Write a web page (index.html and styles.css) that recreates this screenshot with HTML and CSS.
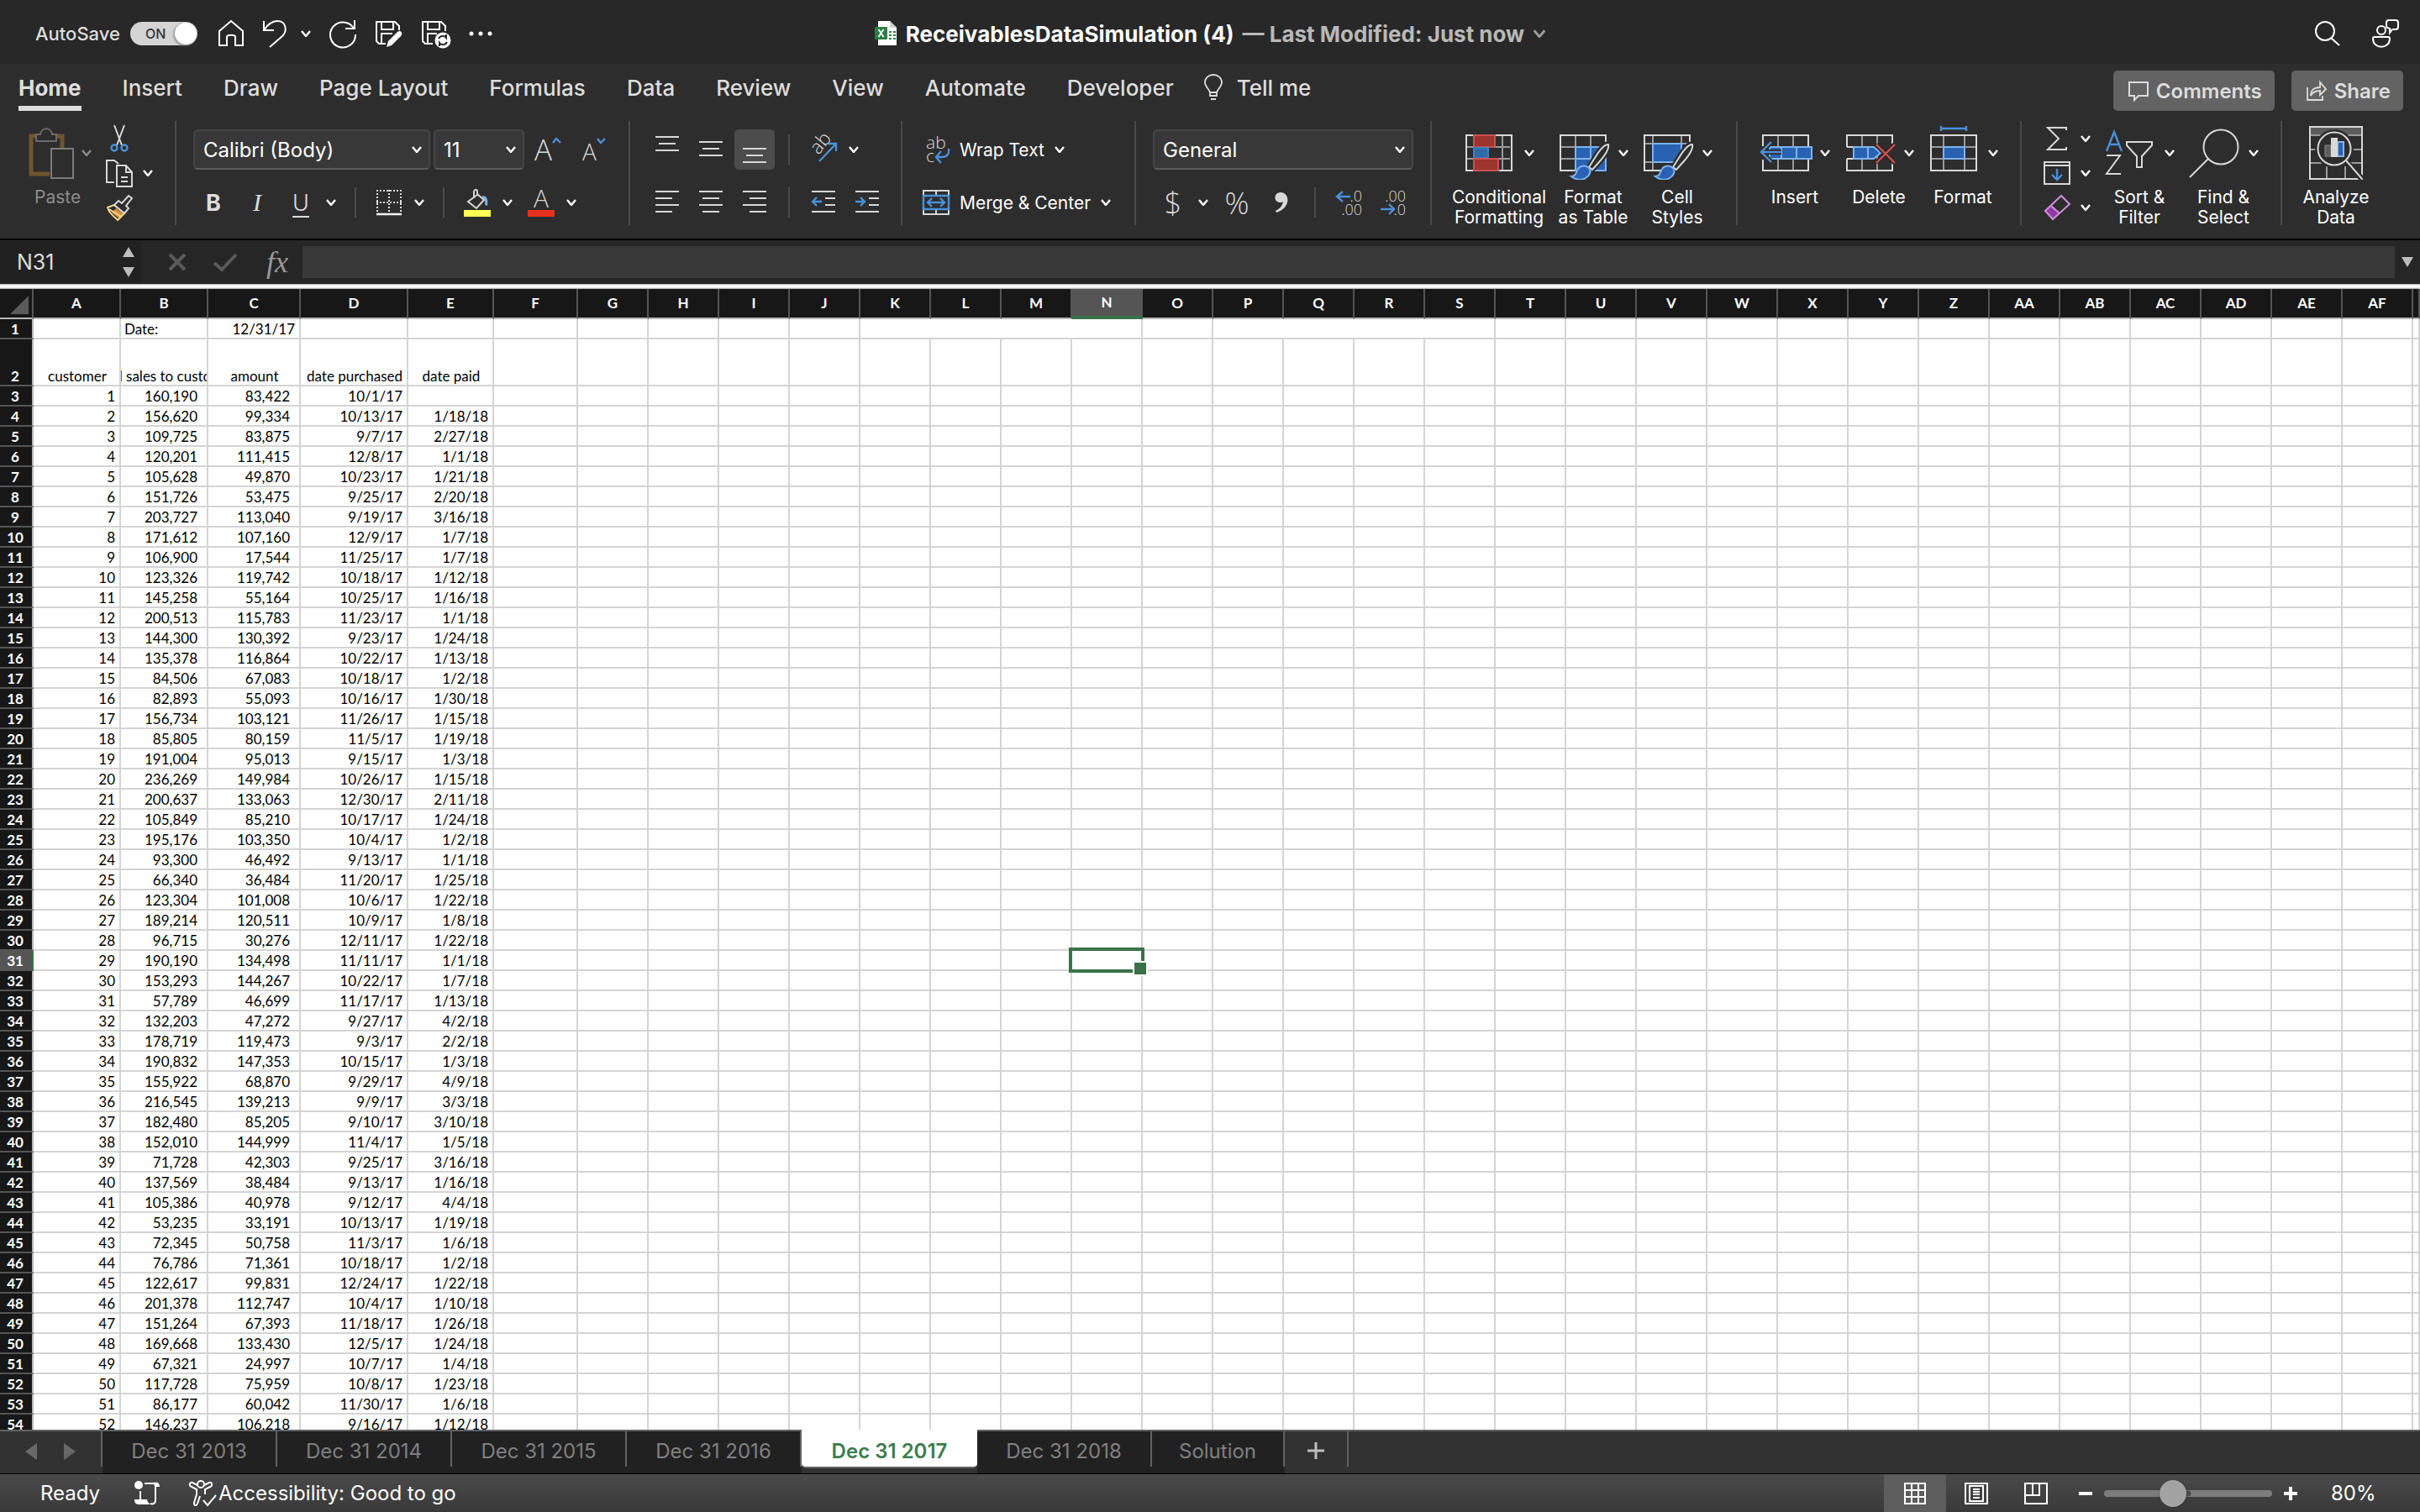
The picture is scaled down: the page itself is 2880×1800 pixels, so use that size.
FILE: index.html
```html
<!DOCTYPE html>
<html lang="en">
<head>
<meta charset="utf-8">
<title>ReceivablesDataSimulation (4)</title>
<link rel="stylesheet" href="styles.css">
</head>
<body>
<svg class="defs" aria-hidden="true">
  <symbol id="chev" viewBox="0 0 12 8"><path d="M1 1l5 6 5-6" fill="none" stroke="currentColor" stroke-width="2.4"/></symbol>
  <symbol id="brush" viewBox="0 0 64 64"><path d="M59 21c-4 0-9 5-16 17l-6 10 5 4c8-8 20-22 18-30z" fill="#2d2d2d" stroke="#2d2d2d" stroke-width="5"/><path d="M60 22c-5 0-10 6-16 16l-7 11 4 3 8-9c8-9 12-17 11-21z" fill="#2d2d2d" stroke="#d8d8d8" stroke-width="2"/><path d="M16 60c6 0 5-5 8-9 3-4 9-5 13-1 3 4 1 9-4 12-5 3-12 2-17-2z" fill="#2962b3" stroke="#7fb3ec" stroke-width="2"/></symbol>
</svg>

<header class="titlebar">
  <div class="quick">
    <label class="autosave">AutoSave <input type="checkbox" checked class="switch-input"><span class="switch">ON<i></i></span></label>
    <button aria-label="Home"><svg width="32" height="34" viewBox="0 0 32 34"><path d="M2 31V14L16 2l14 12v17h-9V21c0-3-10-3-10 0v10z" fill="none" stroke="#fff" stroke-width="2"/></svg></button>
    <button class="with-arrow" aria-label="Undo"><svg width="30" height="34" viewBox="0 0 30 34"><path d="M2 2v11h12M2 13C8 4 13 2 18 2c11 0 12 12 6 18L9 33" fill="none" stroke="#fff" stroke-width="2"/></svg><svg class="chev"><use href="#chev"/></svg></button>
    <button aria-label="Redo"><svg width="34" height="34" viewBox="0 0 34 34"><path d="M31 1v10H20M30 11A15 15 0 1 0 32 18" fill="none" stroke="#fff" stroke-width="2"/></svg></button>
    <button aria-label="Save as"><svg width="34" height="34" viewBox="0 0 34 34"><path d="M13 29H5l-3-3V3h22l5 5v5M8 3v9h14V3M8 29V17h13" fill="none" stroke="#fff" stroke-width="2"/><path d="M14 33l2-7 11-11c4-3 7 2 4 5L20 31z" fill="#fff"/></svg></button>
    <button aria-label="Save and sync"><svg width="36" height="36" viewBox="0 0 36 36"><path d="M14 30H5l-3-3V4h22l5 5v6M8 4v9h14V4M8 30V18h11" fill="none" stroke="#fff" stroke-width="2"/><circle cx="26" cy="26" r="9.500" fill="#fff"/><path d="M21 24c2-4 7-4 9-1v-4M31 28c-2 4-7 4-9 1v4" fill="none" stroke="#282828" stroke-width="2"/></svg></button>
    <button aria-label="More"><svg width="28" height="6" viewBox="0 0 28 6"><circle cx="3" cy="3" r="2.500" fill="#fff"/><circle cx="14" cy="3" r="2.500" fill="#fff"/><circle cx="25" cy="3" r="2.500" fill="#fff"/></svg></button>
  </div>
  <h1 class="doc-title">
    <svg width="28" height="32" viewBox="0 0 28 32"><path d="M5 1h14l8 8v21H5z" fill="#fff"/><path d="M19 1v8h8z" fill="#cfcfcf"/><path d="M18 13h3v2h-3zm5 0h3v2h-3zm-5 4h3v2h-3zm5 0h3v2h-3zm-5 4h3v2h-3zm5 0h3v2h-3z" fill="#2e7d46"/><rect x="1" y="8" width="15" height="15" rx="1" fill="#2e7d46"/><path d="M5.500 11l6 9M11.500 11l-6 9" stroke="#fff" stroke-width="1.800"/></svg>
    <span>ReceivablesDataSimulation (4)</span><span class="modified">— Last Modified: Just now</span><svg class="chev wide"><use href="#chev"/></svg>
  </h1>
  <div class="account">
    <button aria-label="Search"><svg width="32" height="32" viewBox="0 0 32 32"><circle cx="13" cy="13" r="11" fill="none" stroke="#fff" stroke-width="2"/><path d="M20 21l10 9" stroke="#fff" stroke-width="2"/></svg></button>
    <button aria-label="Presence"><svg width="34" height="34" viewBox="0 0 34 34"><g fill="none" stroke="#fff" stroke-width="2"><circle cx="12" cy="13" r="5"/><path d="M2 23c0-2 1-2 2-2h16c1 0 2 0 2 2 0 13-20 13-20 0zM18 4c0-2 1-3 3-3h8c2 0 3 1 3 3v5c0 2-1 3-3 3h-4l-3 4v-5c-3-1-4-1-4-3z"/></g></svg></button>
  </div>
</header>

<div class="tabrow">
  <nav class="tabs">
    <a href="#" class="on">Home</a><a href="#">Insert</a><a href="#">Draw</a><a href="#">Page Layout</a><a href="#">Formulas</a><a href="#">Data</a><a href="#">Review</a><a href="#">View</a><a href="#">Automate</a><a href="#">Developer</a>
    <a href="#" class="tell"><svg width="24" height="32" viewBox="0 0 24 32"><path d="M8 26v-4C7 18 2 15 2 10a10 9 0 0 1 20 0c0 5-5 8-6 12v4zM8 22h8M9 30h6" fill="none" stroke="#ddd" stroke-width="1.800"/></svg>Tell me</a>
  </nav>
  <div class="share">
    <button><svg width="26" height="26" viewBox="0 0 26 26"><path d="M2 3h22v16H13l-5 5v-5H2z" fill="none" stroke="#ddd" stroke-width="2"/></svg>Comments</button>
    <button><svg width="26" height="26" viewBox="0 0 26 26"><path d="M2 9v15h18v-5M6 19c0-7 4-10 11-10V3l7 8-7 7v-5c-6 0-9 2-11 6z" fill="none" stroke="#ddd" stroke-width="1.800"/></svg>Share</button>
  </div>
</div>

<section class="ribbon" aria-label="Home ribbon">
  <div class="group g-clip">
    <button class="paste" aria-label="Paste"><span class="face"><svg width="56" height="62" viewBox="0 0 56 62"><path d="M12 11H4v45h22M32 11h9v14" fill="none" stroke="#70552f" stroke-width="5"/><path d="M10 17V9h5c1-9 13-9 14 0h5v8z" fill="#2d2d2d" stroke="#6b6b6b" stroke-width="2"/><rect x="28" y="26" width="26" height="35" fill="#2d2d2d" stroke="#7b7b7b" stroke-width="2"/></svg><svg class="chev"><use href="#chev"/></svg></span><span class="lbl">Paste</span></button>
    <div class="stack">
      <button aria-label="Cut"><svg width="32" height="34" viewBox="0 0 32 34"><path d="M10 1l9 24M22 1l-9 24" stroke="#d8d8d8" stroke-width="2" fill="none"/><g fill="none" stroke="#4a90d9" stroke-width="2.400"><circle cx="10" cy="28" r="3.500"/><circle cx="22" cy="28" r="3.500"/></g></svg></button>
      <button aria-label="Copy"><svg width="32" height="34" viewBox="0 0 32 34"><g fill="none" stroke="#d8d8d8" stroke-width="2"><path d="M10 28H1V2h9l5 4M13 8h11l7 8v17H13zM24 8v8h7M18 22h8M18 27h8"/></g></svg><svg class="chev"><use href="#chev"/></svg></button>
      <button aria-label="Format painter"><svg width="32" height="32" viewBox="0 0 32 32"><path d="M7 22l10 8 4-6-9-7z" fill="#e0913a"/><path d="M2 16l8-3 12 10-8 8C10 26 4 24 2 16zM4 18l14 9" fill="none" stroke="#f1d58b" stroke-width="2"/><path d="M10 13l5-5 4 3 8-9 4 3-7 9 3 3-5 6z" fill="#2d2d2d" stroke="#d8d8d8" stroke-width="2"/></svg></button>
    </div>
  </div>

  <div class="group rows g-font">
    <div class="row">
      <span class="combo w-font"><select aria-label="Font"><option>Calibri (Body)</option></select><svg class="chev"><use href="#chev"/></svg></span>
      <span class="combo w-size"><select aria-label="Font size"><option>11</option></select><svg class="chev"><use href="#chev"/></svg></span>
      <button class="ic" aria-label="Grow font"><svg width="34" height="34" viewBox="0 0 34 34"><text x="1" y="30" class="lt" font-size="35">A</text><path d="M23 9l4-5 5 5" class="bl"/></svg></button>
      <button class="ic" aria-label="Shrink font"><svg width="34" height="34" viewBox="0 0 34 34"><text x="6" y="30" class="lt" font-size="28">A</text><path d="M24 4l4 5 5-5" class="bl"/></svg></button>
    </div>
    <div class="row">
      <button class="ic bold">B</button><button class="ic ital">I</button><button class="ic und">U</button><button class="arrow" aria-label="Underline styles"><svg class="chev"><use href="#chev"/></svg></button>
      <i class="sep"></i>
      <button class="ic" aria-label="Borders"><svg width="32" height="32" viewBox="0 0 32 32"><path d="M1 2h31M1 16h31" stroke="#ddd" stroke-width="2" stroke-dasharray="2 2"/><path d="M2 1v27M16 1v27M30 1v27" stroke="#ddd" stroke-width="2" stroke-dasharray="2 2"/><path d="M1 30h30" stroke="#fff" stroke-width="2.500"/></svg></button><button class="arrow" aria-label="Border styles"><svg class="chev"><use href="#chev"/></svg></button>
      <i class="sep"></i>
      <button class="ic" aria-label="Fill color"><svg width="32" height="34" viewBox="0 0 32 34"><path d="M16 8L5 16l10 8 9-10-8-7V4c0-3-4-3-4 1v7" fill="none" stroke="#d8d8d8" stroke-width="2"/><path d="M22 9c6 0 7 5 6 12l-3-1c1-4 0-7-3-9z" fill="#7fb3ec"/><rect y="26" width="32" height="8" fill="#ffff54"/></svg></button><button class="arrow far" aria-label="Fill colors"><svg class="chev"><use href="#chev"/></svg></button>
      <button class="ic" aria-label="Font color"><svg width="32" height="34" viewBox="0 0 32 34"><text x="16" y="23" text-anchor="middle" class="lt" font-size="30">A</text><rect y="26" width="32" height="8" fill="#e8301f"/></svg></button><button class="arrow" aria-label="Font colors"><svg class="chev"><use href="#chev"/></svg></button>
    </div>
  </div>

  <div class="group rows g-align">
    <div class="row">
      <button class="ic" aria-label="Top align"><svg class="ln"><path d="M2 2h28M6 10h20M2 18h28"/></svg></button><button class="ic" aria-label="Middle align"><svg class="ln"><path d="M2 8h28M6 16h20M2 24h28"/></svg></button><button class="ic pressed" aria-label="Bottom align"><svg class="ln"><path d="M2 16h28M6 24h20M2 32h28"/></svg></button>
      <i class="sep even"></i>
      <button class="ic" aria-label="Orientation"><svg width="34" height="34" viewBox="0 0 34 34"><text x="0" y="0" transform="translate(11 24) rotate(-50)" class="lt" font-size="23">ab</text><path d="M12 31l20-21M23 10h9v9" class="bl"/></svg></button><button class="arrow" aria-label="Orientation options"><svg class="chev"><use href="#chev"/></svg></button>
    </div>
    <div class="row">
      <button class="ic" aria-label="Align left"><svg class="ln"><path d="M2 4h28M2 12h20M2 20h28M2 28h20"/></svg></button><button class="ic" aria-label="Center"><svg class="ln"><path d="M2 4h28M6 12h20M2 20h28M6 28h20"/></svg></button><button class="ic" aria-label="Align right"><svg class="ln"><path d="M2 4h28M10 12h20M2 20h28M10 28h20"/></svg></button>
      <i class="sep even"></i>
      <button class="ic" aria-label="Decrease indent"><svg class="ln"><path d="M2 4h28M18 12h12M18 20h12M2 28h28"/><path d="M14 16H3M8 11l-5 5 5 5" class="bl"/></svg></button><button class="ic" aria-label="Increase indent"><svg class="ln"><path d="M2 4h28M18 12h12M18 20h12M2 28h28"/><path d="M2 16h11M8 11l5 5-5 5" class="bl"/></svg></button>
    </div>
  </div>

  <div class="group rows g-wrap">
    <div class="row"><button class="txt"><svg width="32" height="36" viewBox="0 0 32 36"><text x="4" y="17" class="lt" font-size="21">ab</text><text x="4" y="33" class="lt" font-size="21">c</text><path d="M31 17c1 7-3 10-8 10h-7M22 20l-6 7 6 7" class="bl"/></svg>Wrap Text<svg class="chev"><use href="#chev"/></svg></button></div>
    <div class="row"><button class="txt"><svg width="32" height="32" viewBox="0 0 32 32"><path d="M1 2h30v28H1zM16 2v6M16 24v6" fill="none" stroke="#d8d8d8" stroke-width="2"/><rect x="1" y="8" width="30" height="16" fill="#2d2d2d" stroke="#4a90d9" stroke-width="2.500"/><path d="M6 16h20M11 11l-5 5 5 5M21 11l5 5-5 5" class="bl"/></svg>Merge &amp; Center<svg class="chev"><use href="#chev"/></svg></button></div>
  </div>

  <div class="group rows g-num">
    <div class="row"><span class="combo w-num"><select aria-label="Number format"><option>General</option></select><svg class="chev"><use href="#chev"/></svg></span></div>
    <div class="row">
      <button class="ic glyph">$</button><button class="arrow far" aria-label="Currency options"><svg class="chev"><use href="#chev"/></svg></button><button class="ic glyph">%</button><button class="ic" aria-label="Comma style"><svg width="20" height="28" viewBox="0 0 20 28"><path d="M10 2c-8 0-9 11-1 12 2 0 3 0 4-1-1 5-4 9-9 11l1 2C23 20 21 2 10 2z" fill="#d8d8d8"/></svg></button>
      <i class="sep even"></i>
      <button class="ic" aria-label="Increase decimal"><svg width="34" height="34" viewBox="0 0 34 34"><text x="32" y="16" text-anchor="end" class="lt" font-size="18">.0</text><text x="32" y="32" text-anchor="end" class="lt" font-size="18">.00</text><path d="M18 10H2M9 4l-7 6 7 6" class="bl"/></svg></button><button class="ic" aria-label="Decrease decimal"><svg width="34" height="34" viewBox="0 0 34 34"><text x="32" y="16" text-anchor="end" class="lt" font-size="18">.00</text><text x="32" y="32" text-anchor="end" class="lt" font-size="18">.0</text><path d="M2 25h16M12 19l6 6-6 6" class="bl"/></svg></button>
    </div>
  </div>

  <div class="group g-style">
    <button class="big wide"><span class="face"><svg width="64" height="64" viewBox="0 0 64 64"><path d="M3 25h52M3 39h52M12 10v44M46 10v44" stroke="#9a9a9a" stroke-width="2"/><rect x="3" y="11" width="54" height="42" fill="none" stroke="#d8d8d8" stroke-width="2"/><rect x="12" y="11" width="25" height="14" fill="#9c3430" stroke="#c9524d" stroke-width="2"/><rect x="12" y="26" width="17" height="12" fill="#3169a5" stroke="#3f7fc0" stroke-width="2"/><rect x="30" y="26" width="15" height="12" fill="#2d2d2d"/><rect x="12" y="39" width="29" height="14" fill="#9c3430" stroke="#c9524d" stroke-width="2"/></svg><svg class="chev"><use href="#chev"/></svg></span><span class="lbl">Conditional<br>Formatting</span></button>
    <button class="big"><span class="face"><svg width="64" height="64" viewBox="0 0 64 64"><path d="M3 25h54M3 39h18M21 11v43M39 11v14" stroke="#9a9a9a" stroke-width="2"/><rect x="3" y="11" width="54" height="42" fill="none" stroke="#d8d8d8" stroke-width="2"/><path d="M21 25h36v28H21z" fill="#2962b3" stroke="#7fb3ec" stroke-width="2"/><path d="M39 25v28M21 39h36" stroke="#7fb3ec" stroke-width="2"/><use href="#brush" width="64" height="64"/></svg><svg class="chev"><use href="#chev"/></svg></span><span class="lbl">Format<br>as Table</span></button>
    <button class="big"><span class="face"><svg width="64" height="64" viewBox="0 0 64 64"><path d="M3 21h54M3 43h54M13 11v43M47 11v43" stroke="#9a9a9a" stroke-width="2"/><path d="M57 24V11H3v42h22" fill="none" stroke="#d8d8d8" stroke-width="2"/><rect x="13" y="21" width="34" height="22" fill="#2962b3" stroke="#7fb3ec" stroke-width="2"/><path d="M50 26h9v30H30V46h12z" fill="#2d2d2d"/><use href="#brush" width="64" height="64"/></svg><svg class="chev"><use href="#chev"/></svg></span><span class="lbl">Cell<br>Styles</span></button>
  </div>

  <div class="group g-cells">
    <button class="big"><span class="face"><svg width="64" height="64" viewBox="0 0 64 64"><path d="M22 11v42M40 11v42" stroke="#9a9a9a" stroke-width="2"/><path d="M4 24V11h54v13M4 40v13h54V40" fill="none" stroke="#d8d8d8" stroke-width="2"/><path d="M12 25h50v14H12z" fill="#2962b3" stroke="#7fb3ec" stroke-width="2"/><path d="M26 25v14M44 25v14" stroke="#7fb3ec" stroke-width="2"/><path d="M26 31H2M14 19L2 31l12 12" fill="none" stroke="#2d2d2d" stroke-width="6"/><path d="M26 31H2M14 19L2 31l12 12" class="bl"/></svg><svg class="chev"><use href="#chev"/></svg></span><span class="lbl">Insert</span></button>
    <button class="big"><span class="face"><svg width="64" height="64" viewBox="0 0 64 64"><path d="M22 11v42M40 11v42" stroke="#9a9a9a" stroke-width="2"/><path d="M4 25V11h54v10M58 44v9H4V39M4 25h8M4 39h8" fill="none" stroke="#d8d8d8" stroke-width="2"/><path d="M12 25h24l8 7-8 7H12z" fill="#2962b3" stroke="#7fb3ec" stroke-width="2"/><path d="M29 25v14" stroke="#7fb3ec" stroke-width="2"/><path d="M39 22l22 22M61 22L39 44" stroke="#2d2d2d" stroke-width="6"/><path d="M39 22l22 22M61 22L39 44" stroke="#e0504a" stroke-width="2"/></svg><svg class="chev"><use href="#chev"/></svg></span><span class="lbl">Delete</span></button>
    <button class="big"><span class="face"><svg width="64" height="64" viewBox="0 0 64 64"><path d="M3 25h54M3 39h54M19 11v42M44 11v42" stroke="#9a9a9a" stroke-width="2"/><rect x="4" y="11" width="54" height="42" fill="none" stroke="#d8d8d8" stroke-width="2"/><rect x="19" y="25" width="25" height="14" fill="#2962b3" stroke="#7fb3ec" stroke-width="2"/><path d="M16 3h30M16 0v6M46 0v6" class="bl"/></svg><svg class="chev"><use href="#chev"/></svg></span><span class="lbl">Format</span></button>
  </div>

  <div class="group g-edit">
    <div class="stack">
      <button aria-label="AutoSum"><svg width="32" height="34" viewBox="0 0 32 34"><path d="M27 7V4H5l13 13L5 30h22v-3" fill="none" stroke="#d8d8d8" stroke-width="2"/></svg><svg class="chev"><use href="#chev"/></svg></button>
      <button aria-label="Fill"><svg width="32" height="32" viewBox="0 0 32 32"><path d="M1 3h30v26H1zM1 7h30" fill="none" stroke="#d8d8d8" stroke-width="2"/><path d="M16 11v13M10 18l6 6 6-6" class="bl"/></svg><svg class="chev"><use href="#chev"/></svg></button>
      <button aria-label="Clear"><svg width="32" height="32" viewBox="0 0 32 32"><path d="M2 20l7-6 10 9-8 7z" fill="#8f3ba3"/><path d="M2 20L21 2l10 10-20 18zM9 14l10 9" fill="none" stroke="#cf8ede" stroke-width="2"/></svg><svg class="chev"><use href="#chev"/></svg></button>
    </div>
    <button class="big"><span class="face"><svg width="64" height="64" viewBox="0 0 64 64"><path d="M3 30l9-23 9 23M6 22h12" class="bl"/><path d="M3 35h16L3 57h17M27 19h30v4L45 36v13h-6V36L27 23z" fill="none" stroke="#d8d8d8" stroke-width="2"/></svg><svg class="chev"><use href="#chev"/></svg></span><span class="lbl">Sort &amp;<br>Filter</span></button>
    <button class="big"><span class="face"><svg width="64" height="64" viewBox="0 0 64 64"><circle cx="39" cy="25" r="20.500" fill="none" stroke="#d8d8d8" stroke-width="2"/><path d="M24 39L2 61" stroke="#d8d8d8" stroke-width="2"/></svg><svg class="chev"><use href="#chev"/></svg></span><span class="lbl">Find &amp;<br>Select</span></button>
  </div>

  <div class="group g-analyze">
    <button class="big"><span class="face"><svg width="64" height="64" viewBox="0 0 64 64"><rect x="1" y="1" width="62" height="10" fill="#5d5d5d"/><path d="M1 28h12M50 28h13M1 44h14M48 44h15M21 48v15M43 48v15M1 11h62" stroke="#9a9a9a" stroke-width="2"/><rect x="1" y="1" width="62" height="62" fill="none" stroke="#d8d8d8" stroke-width="2"/><circle cx="30" cy="27" r="23" fill="#2d2d2d"/><circle cx="30" cy="27" r="19.500" fill="none" stroke="#d8d8d8" stroke-width="2"/><path d="M44 42l19 21" stroke="#2d2d2d" stroke-width="7"/><path d="M44 41l19 22" stroke="#d8d8d8" stroke-width="2"/><rect x="19" y="23" width="7" height="13" fill="#5d5d5d" stroke="#8a8a8a"/><rect x="34" y="19" width="7" height="17" fill="#2962b3" stroke="#7fb3ec" stroke-width="2"/><rect x="26" y="14" width="8" height="23" fill="#d8d8d8"/></svg></span><span class="lbl">Analyze<br>Data</span></button>
  </div>
</section>

<section class="formula">
  <div class="namebox"><input type="text" value="N31" aria-label="Name box"><svg width="14" height="36" viewBox="0 0 14 36"><path d="M7 0l7 12H0zM0 24h14L7 36z" fill="#bdbdbd"/></svg></div>
  <button aria-label="Cancel"><svg width="22" height="22" viewBox="0 0 22 22"><path d="M2 2l18 18M20 2L2 20" stroke="#5a5a5a" stroke-width="4"/></svg></button>
  <button aria-label="Enter"><svg width="30" height="22" viewBox="0 0 30 22"><path d="M2 12l9 8L28 2" fill="none" stroke="#5a5a5a" stroke-width="4"/></svg></button>
  <button class="fx">fx</button>
  <input class="fbar" type="text" aria-label="Formula">
  <button class="expand" aria-label="Expand formula bar"><svg width="14" height="12" viewBox="0 0 14 12"><path d="M0 0h14L7 12z" fill="#bdbdbd"/></svg></button>
</section>

<main class="sheet"><table id="grid"></table></main>

<footer>
  <div class="sheetbar">
    <div class="nav"><button aria-label="Previous sheet"><svg width="14" height="20" viewBox="0 0 14 20"><path d="M14 0v20L0 10z" fill="#686868"/></svg></button><button aria-label="Next sheet"><svg width="14" height="20" viewBox="0 0 14 20"><path d="M0 0v20l14-10z" fill="#686868"/></svg></button></div>
    <button class="st"><span>Dec 31 2013</span></button><button class="st"><span>Dec 31 2014</span></button><button class="st"><span>Dec 31 2015</span></button><button class="st"><span>Dec 31 2016</span></button><button class="st active"><span>Dec 31 2017</span></button><button class="st"><span>Dec 31 2018</span></button><button class="st short"><span>Solution</span></button><button class="st add" aria-label="Add sheet"><span><svg width="20" height="20" viewBox="0 0 20 20"><path d="M10 0v20M0 10h20" stroke="#bdbdbd" stroke-width="3"/></svg></span></button>
  </div>
  <div class="status">
    <span class="ready">Ready</span>
    <button class="macro" aria-label="Record macro"><svg width="32" height="30" viewBox="0 0 32 30"><circle cx="6" cy="5" r="5" fill="#fff"/><path d="M13 3h13v20c0 4-3 5-6 4" fill="none" stroke="#fff" stroke-width="2"/><path d="M24 2c4-1 7 0 7 5h-6zM1 22h15c0 3 2 4 4 6H6c-4 0-5-3-5-6zM7 12h2v10H7z" fill="#fff"/></svg></button>
    <button class="access"><svg width="36" height="32" viewBox="0 0 36 32"><g fill="none" stroke="#fff" stroke-width="2"><circle cx="15" cy="5" r="4"/><path d="M11 6L5 3C1 2 1 7 4 8l6 3v6L7 27c0 4 3 4 4 1l3-9M19 6l6-3c4-1 4 4 1 5l-6 3v6M18 24l5 6 10-12"/></g></svg>Accessibility: Good to go</button>
    <div class="views">
      <button class="cur" aria-label="Normal view"><svg width="26" height="26" viewBox="0 0 26 26"><path d="M1 1h24v24H1zM9 1v24M17 1v24M1 9h24M1 17h24" fill="none" stroke="#fff" stroke-width="2"/></svg></button>
      <button aria-label="Page layout view"><svg width="28" height="26" viewBox="0 0 28 26"><path d="M1 1h26v24H1zM6 4h16v18H6zM10 8h8M10 11h8M10 14h8M10 18h8" fill="none" stroke="#fff" stroke-width="2"/></svg></button>
      <button aria-label="Page break view"><svg width="28" height="26" viewBox="0 0 28 26"><path d="M1 1h26v24H1zM10 1v14M18 1v14H1" fill="none" stroke="#fff" stroke-width="2"/></svg></button>
    </div>
    <button class="zm" aria-label="Zoom out"><svg width="16" height="16" viewBox="0 0 16 16"><path d="M0 8h16" stroke="#fff" stroke-width="4"/></svg></button>
    <input class="zoom" type="range" min="0" max="100" value="39" aria-label="Zoom">
    <button class="zm" aria-label="Zoom in"><svg width="16" height="16" viewBox="0 0 16 16"><path d="M0 8h16M8 0v16" stroke="#fff" stroke-width="4"/></svg></button>
    <span class="pct">80%</span>
  </div>
</footer>
<script src="script.js"></script>
</body>
</html>
```
FILE: styles.css
```css
* { box-sizing: border-box; }
body { margin: 0; height: 100vh; display: flex; flex-direction: column; overflow: hidden; background: #282828; color: #fff; font-family: Inter, "Liberation Sans", sans-serif; font-size: 24px; }
button { background: none; border: 0; padding: 0; margin: 0; font: inherit; color: inherit; display: inline-flex; align-items: center; justify-content: center; }
a { color: inherit; text-decoration: none; }
svg { flex: none; display: block; overflow: visible; }
.defs { position: absolute; width: 0; height: 0; }
.chev { width: 12px; height: 8px; }
.bl { fill: none; stroke: #4a90d9; stroke-width: 2.4; }
.lt { fill: #d8d8d8; font-family: "Open Sans", "Noto Sans", sans-serif; font-weight: 300; }

.titlebar { flex: none; height: 76px; padding: 4px 24px 0; display: grid; grid-template-columns: 1fr auto 1fr; align-items: center; }
.quick { display: flex; align-items: center; gap: 21px; padding-left: 18px; }
.autosave { display: flex; align-items: center; gap: 12px; color: #ddd; font-size: 22px; font-weight: 500; margin-right: 3px; }
.switch-input { position: absolute; opacity: 0; }
.switch { width: 80px; height: 28px; border-radius: 14px; background: #d4d4d4; color: #333; font-size: 16px; line-height: 28px; padding-left: 18px; position: relative; }
.switch i { position: absolute; right: 1px; top: 1px; width: 26px; height: 26px; border-radius: 13px; background: #fff; box-shadow: -1px 1px 3px #777; }
.with-arrow { gap: 16px; }
.doc-title { margin: 0; display: flex; align-items: center; gap: 10px; font-size: 26px; font-weight: 700; }
.modified { color: #b9b9b9; }
.doc-title .chev { color: #999; width: 16px; height: 10px; }
.account { display: flex; justify-content: flex-end; gap: 36px; }

.tabrow { flex: none; height: 68px; background: #2d2d2d; display: flex; justify-content: space-between; padding: 0 20px 0 22px; }
.tabs { display: flex; gap: 49px; font-size: 26px; font-weight: 500; color: #ddd; }
.tabs a { height: 56px; padding-top: 12px; line-height: 34px; }
.tabs .on { font-weight: 700; border-bottom: 6px solid #ddd; }
.tabs .tell { display: flex; gap: 16px; margin-left: -14px; }
.share { display: flex; gap: 20px; padding-top: 8px; font-size: 24px; font-weight: 600; color: #ddd; }
.share button { height: 48px; padding: 0 15px 0 17px; gap: 8px; border-radius: 5px; background: #636363; }

.ribbon { flex: none; height: 142px; background: #2d2d2d; border-bottom: 2px solid #000; display: flex; }
.group { height: 124px; display: flex; padding-left: 20px; gap: 4px; border-left: 2px solid #4a4a4a; }
.rows { flex-direction: column; padding-top: 10px; gap: 15px; }
.g-clip { width: 208px; border: 0; padding-left: 33px; gap: 16px; }
.g-font { width: 540px; }
.g-align { width: 324px; }
.g-wrap { width: 278px; }
.g-num { width: 352px; }
.g-style { width: 364px; }
.g-cells { width: 338px; }
.g-edit { width: 310px; }
.g-edit .stack { margin: 0 6px; }
.row { height: 48px; display: flex; align-items: center; gap: 4px; }
.ic { width: 48px; height: 48px; }
.arrow { width: 12px; margin-left: 2px; }
.arrow.far { margin-right: 6px; }
.sep { width: 2px; height: 36px; background: #4a4a4a; margin: 0 11px 0 18px; }
.sep.even { margin: 0 12px; }
.pressed { background: #4c4c4c; border-radius: 5px; }
.ln { width: 32px; height: 34px; fill: none; stroke: #d8d8d8; stroke-width: 2; }
.bold { font-size: 27px; font-weight: 700; color: #ddd; }
.ital { font: italic 30px "Liberation Serif", serif; color: #ddd; }
.und { font-size: 27px; font-weight: 300; text-decoration: underline; text-underline-offset: 6px; color: #ddd; }
.glyph { font: 300 36px "Open Sans", sans-serif; color: #d8d8d8; }
.combo { display: grid; grid-template-columns: 1fr 12px; align-items: center; height: 48px; padding-right: 8px; background: #383838; border: 2px solid #454545; border-bottom-color: #5c5c5c; border-radius: 5px; }
.combo select { grid-area: 1 / 1 / 2 / 3; appearance: none; background: none; border: 0; margin: 0; padding: 0 0 0 10px; height: 44px; width: 100%; color: #fff; font: inherit; }
.combo .chev { grid-area: 1 / 2; pointer-events: none; }
.w-font { width: 282px; }
.w-size { width: 108px; }
.w-num { width: 310px; }
.txt { height: 48px; padding-left: 4px; gap: 12px; font-size: 21px; }
.big, .paste { flex-direction: column; justify-content: flex-start; padding-top: 6px; width: 96px; font-size: 21px; line-height: 24px; align-self: flex-start; }
.big.wide { width: 120px; }
.g-analyze .big { width: 88px; }
.face { display: flex; align-items: center; gap: 8px; height: 64px; margin-bottom: 9px; }
.lbl { white-space: nowrap; text-align: center; }
.paste { width: 77px; color: #8c8c8c; align-items: flex-start; }
.paste .lbl { padding-left: 8px; }
.stack { display: flex; flex-direction: column; align-items: flex-start; }
.stack button { height: 44px; gap: 12px; }

.formula { flex: none; height: 52px; background: #262626; display: flex; align-items: center; padding-right: 8px; }
.namebox { width: 168px; height: 50px; background: #212121; display: flex; align-items: center; justify-content: space-between; padding: 0 8px 0 20px; margin-right: 32px; }
.namebox input { width: 100px; border: 0; padding: 0; background: none; color: #ddd; font: 25px Inter, sans-serif; }
.formula button { margin-right: 31px; }
.formula .fx { font: italic 36px "Liberation Serif", serif; color: #999; line-height: 38px; margin: 0 14px 0 0; width: 32px; }
.fbar { flex: 1; height: 38px; border: 0; background: #383838; color: #fff; font-size: 24px; }
.formula .expand { margin: 0 0 0 8px; }

.sheet { flex: 1; min-height: 0; overflow: hidden; padding-top: 6px; background: linear-gradient(#a8a8a8, #fff 2px, #fff 4px, #a0a0a0 6px, #fff 6px); color: #000; }
table { table-layout: fixed; width: 100%; border-collapse: separate; border-spacing: 0; font: 17px/24px Lato, sans-serif; }
th, td { padding: 0; border: solid #d4d4d4; border-width: 0 2px 2px 0; height: 24px; }
th { background: #171717; color: #fff; font-weight: 700; border-color: #555; }
thead th { height: 36px; border-bottom-color: #b8b8b8; line-height: 32px; }
tbody th { border-right-color: #b8b8b8; padding-right: 2px; }
td > div, tbody th > div { height: 22px; overflow: hidden; white-space: nowrap; }
.tall > * { height: 56px; vertical-align: bottom; }
.tall > td > div { display: flex; justify-content: center; padding-left: 2px; }
.num { text-align: right; padding-right: 5px; }
.acct { text-align: right; padding-right: 11px; }
.left { padding-left: 4px; }
.corner svg { margin: 4px 4px 0 auto; }
thead .sel { background: #555; border-right-color: #555; border-bottom: 4px solid #3b7249; }
tbody .sel { background: #555; border-right-color: #3b7249; }
.cursor { position: relative; }
td.cursor > div { position: absolute; inset: -4px; height: auto; overflow: visible; border: 4px solid #3b7249; }
td.cursor > div::after { content: ""; position: absolute; right: -8px; bottom: -8px; width: 14px; height: 14px; background: #3b7249; border: 2px solid #fff; }

footer { flex: none; }
.sheetbar { height: 52px; border-top: 2px solid #626262; background: #323232; display: flex; font-size: 24px; color: #808080; }
.nav { width: 122px; display: flex; gap: 32px; padding-left: 30px; padding-bottom: 2px; border-right: 2px solid #626262; height: 42px; padding-top: 8px; }
.st { width: 208px; height: 50px; background: #212121; align-items: flex-start; }
.st span { flex: 1; height: 42px; padding-top: 4px; border-right: 2px solid #626262; display: flex; align-items: center; justify-content: center; }
.st.active { width: 209px; background: #323232; color: #3b7d4e; font-weight: 600; }
.st.active span { background: #fff; height: 46px; margin-top: -2px; padding-top: 6px; border: 0; border-bottom: 2px solid #626262; border-radius: 0 0 5px 5px; }
.st.short { width: 158px; }
.st.add { width: 76px; background: none; }
.status { height: 46px; border-top: 1px solid #000; background: linear-gradient(#4a4a4a, #393939); display: flex; align-items: center; padding-left: 48px; padding-right: 54px; }
.ready { width: 110px; }
.macro { width: 34px; margin-right: 32px; }
.access { gap: 0; }
.views { display: flex; align-self: stretch; margin-left: auto; margin-right: 16px; }
.views button { width: 71px; }
.views .cur { width: 74px; background: #5d5d5d; }
.zoom { appearance: none; width: 200px; height: 8px; border-radius: 4px; margin: 0 14px; background: radial-gradient(circle at 100px 4px, #4a4a4a 3px, #7c7c7c 4px); }
.zoom::-webkit-slider-thumb { appearance: none; width: 32px; height: 32px; border-radius: 16px; background: #a3a3a3; box-shadow: 0 1px 2px #333; }
.pct { margin-left: 40px; width: 52px; }
```
FILE: script.js
```js
const records = `160,190 83,422 10/1/17
156,620 99,334 10/13/17 1/18/18
109,725 83,875 9/7/17 2/27/18
120,201 111,415 12/8/17 1/1/18
105,628 49,870 10/23/17 1/21/18
151,726 53,475 9/25/17 2/20/18
203,727 113,040 9/19/17 3/16/18
171,612 107,160 12/9/17 1/7/18
106,900 17,544 11/25/17 1/7/18
123,326 119,742 10/18/17 1/12/18
145,258 55,164 10/25/17 1/16/18
200,513 115,783 11/23/17 1/1/18
144,300 130,392 9/23/17 1/24/18
135,378 116,864 10/22/17 1/13/18
84,506 67,083 10/18/17 1/2/18
82,893 55,093 10/16/17 1/30/18
156,734 103,121 11/26/17 1/15/18
85,805 80,159 11/5/17 1/19/18
191,004 95,013 9/15/17 1/3/18
236,269 149,984 10/26/17 1/15/18
200,637 133,063 12/30/17 2/11/18
105,849 85,210 10/17/17 1/24/18
195,176 103,350 10/4/17 1/2/18
93,300 46,492 9/13/17 1/1/18
66,340 36,484 11/20/17 1/25/18
123,304 101,008 10/6/17 1/22/18
189,214 120,511 10/9/17 1/8/18
96,715 30,276 12/11/17 1/22/18
190,190 134,498 11/11/17 1/1/18
153,293 144,267 10/22/17 1/7/18
57,789 46,699 11/17/17 1/13/18
132,203 47,272 9/27/17 4/2/18
178,719 119,473 9/3/17 2/2/18
190,832 147,353 10/15/17 1/3/18
155,922 68,870 9/29/17 4/9/18
216,545 139,213 9/9/17 3/3/18
182,480 85,205 9/10/17 3/10/18
152,010 144,999 11/4/17 1/5/18
71,728 42,303 9/25/17 3/16/18
137,569 38,484 9/13/17 1/16/18
105,386 40,978 9/12/17 4/4/18
53,235 33,191 10/13/17 1/19/18
72,345 50,758 11/3/17 1/6/18
76,786 71,361 10/18/17 1/2/18
122,617 99,831 12/24/17 1/22/18
201,378 112,747 10/4/17 1/10/18
151,264 67,393 11/18/17 1/26/18
169,668 133,430 12/5/17 1/24/18
67,321 24,997 10/7/17 1/4/18
117,728 75,959 10/8/17 1/23/18
86,177 60,042 11/30/17 1/6/18
146,237 106,218 9/16/17 1/12/18`.split("\n").map(line => line.split(" "));

const widths = [40, 104, 104, 110, 128, 102, 100];
const letter = i => (i >= 26 ? "A" : "") + String.fromCharCode(65 + i % 26);
const columns = 33;
const blank = n => "<td></td>".repeat(n);
const cell = (cls, text) => `<td class="${cls}"><div>${text}</div></td>`;
const head = n => `<th scope="row"${n === 31 ? ' class="sel"' : ""}><div>${n}</div></th>`;

let html = "<colgroup>";
for (let i = 0; i < columns; i++) html += `<col style="width:${widths[i] || 84}px">`;
html += "<col></colgroup><thead><tr><th class=\"corner\"><svg width=\"22\" height=\"22\"><path d=\"M22 0v22H0z\" fill=\"#5a5a5a\"/></svg></th>";
for (let i = 0; i < columns - 1; i++) html += `<th scope="col"${i === 13 ? ' class="sel"' : ""}>${letter(i)}</th>`;
html += "<th></th></tr></thead><tbody>";
html += `<tr>${head(1)}${blank(1)}${cell("left", "Date:")}${cell("num", "12/31/17")}${blank(7)}<td colspan="4"></td>${blank(1)}<td colspan="4"></td>${blank(14)}</tr>`;
html += `<tr class="tall">${head(2)}${["customer", "total sales to customer", "amount", "date purchased", "date paid"].map(t => cell("", t)).join("")}${blank(28)}</tr>`;
records.forEach((r, i) => {
  const n = i + 3;
  html += `<tr>${head(n)}${cell("num", i + 1)}${cell("acct", r[0])}${cell("acct", r[1])}${cell("num", r[2])}${cell("num", r[3] || "")}`;
  html += n === 31 ? `${blank(8)}<td class="cursor"><div></div></td>${blank(19)}` : blank(28);
  html += "</tr>";
});
document.getElementById("grid").innerHTML = html + "</tbody>";
```
